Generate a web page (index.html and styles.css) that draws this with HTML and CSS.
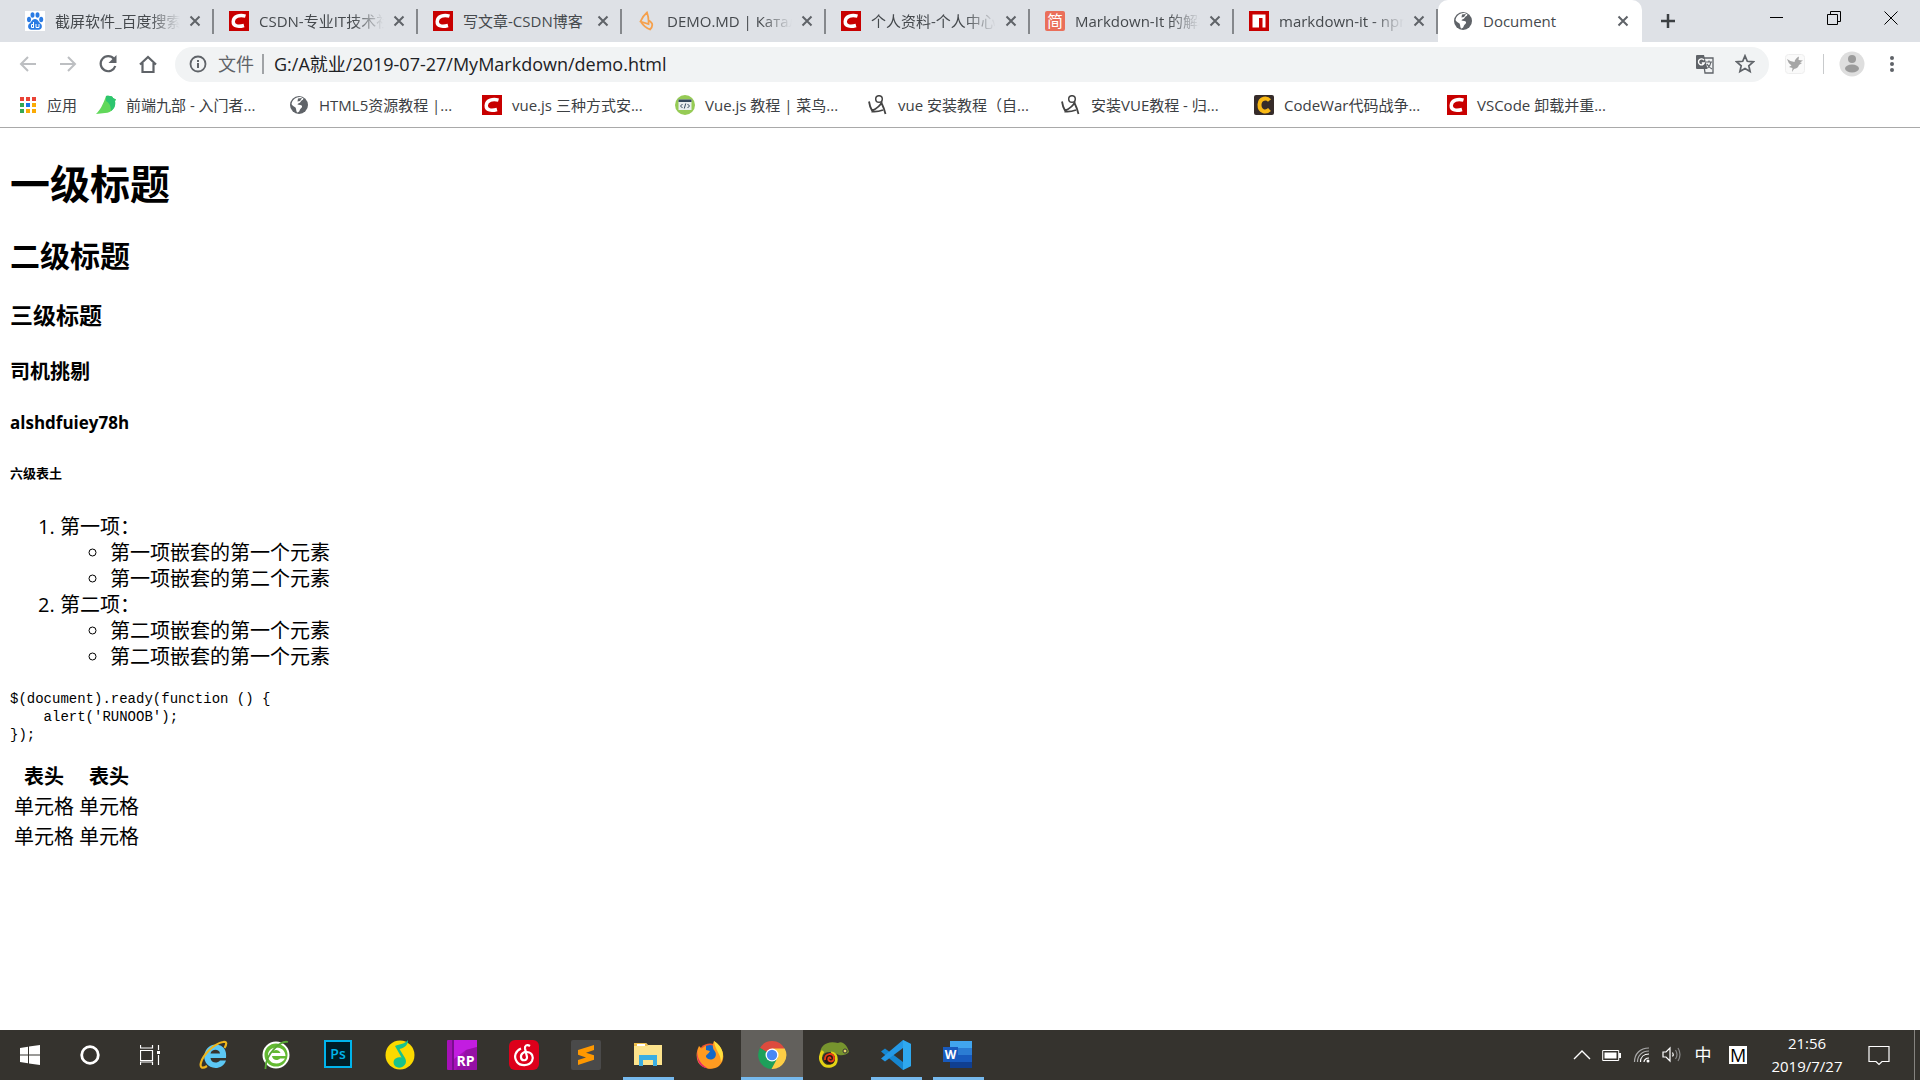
FILE: index.html
```
<!DOCTYPE html>
<html lang="zh-CN">
<head>
    <meta charset="UTF-8">
    <meta name="viewport" content="width=device-width, initial-scale=1.0">
    <title>Document</title>
    <link rel="stylesheet" href="styles.css">
</head>
<body>
    <!-- Shared icons -->
    <svg class="defs" width="0" height="0">
        <symbol id="close" viewBox="0 0 12 12"><path d="M1.5 1.5l9 9M10.5 1.5l-9 9" stroke="#5f6368" stroke-width="2" fill="none"/></symbol>
        <symbol id="csdn" viewBox="0 0 20 20">
            <rect width="20" height="20" fill="#c80000"/>
            <path d="M16.5 5.2C11 3.600 4.600 5 4.200 10.500C4 15.600 9.500 16 15 14.500" stroke="#fff" stroke-width="3.400" fill="none"/>
        </symbol>
        <symbol id="globe" viewBox="0 0 20 20">
            <circle cx="10" cy="10" r="9" fill="#5f6368"/>
            <path d="M8 2.500C10 1.500 13 2 14.500 3.500C14 5.500 12 5.200 11.500 7C11 8.500 8.500 8 8.500 9.500C10 10 12.500 9.500 13 11C13.500 12.500 12 13 11 14.500C10.500 16 10 17 8.500 17.500C7 17 7.500 14 6.500 12.500C5 11.500 3 10.500 2.500 9C3 6 5 3.500 8 2.500Z" fill="#fff"/>
            <path d="M9 3.500l4-.5-2 3-2.500.5zM13.500 9l3.500-2 .8 3-2 4-2-1z" fill="#5f6368"/>
        </symbol>
        <symbol id="figure" viewBox="0 0 20 20">
            <circle cx="11" cy="4" r="3.300" stroke="#444" stroke-width="1.500" fill="none"/>
            <path d="M1 6.500C1.500 10 2.500 13 4 15.500C8 14 12 11.500 14 6.500M13.500 8C15 11 16.500 15 17.500 19M3.500 16.500C7 17 11 16.500 15 15" stroke="#444" stroke-width="1.800" fill="none"/>
        </symbol>
    </svg>

    <!-- Tabs -->
    <div class="tab-bar">
        <div class="tab">
            <svg class="favicon" viewBox="0 0 20 20"><rect width="20" height="20" fill="#fff"/><g fill="#2a7be4"><ellipse cx="4" cy="8.500" rx="2" ry="2.800"/><ellipse cx="7.500" cy="4" rx="2" ry="2.800"/><ellipse cx="12.500" cy="4" rx="2" ry="2.800"/><ellipse cx="16.200" cy="8.500" rx="2" ry="2.800"/><path d="M10 8C13 8 13.500 11 15.500 12.500C18 14.500 17 19 13.500 18.800H6.500C3 19 2 14.500 4.500 12.500C6.500 11 7 8 10 8Z"/></g><path d="M8.500 11v6M8.500 13.500h-2v3h2M11 13v3.500h3V13" stroke="#fff" fill="none"/></svg>
            <a href="#">截屏软件_百度搜索</a>
            <button class="tab-close" aria-label="关闭"><svg width="12" height="12"><use href="#close"/></svg></button>
        </div>
        <div class="tab">
            <svg class="favicon"><use href="#csdn"/></svg>
            <a href="#">CSDN-专业IT技术社区</a>
            <button class="tab-close" aria-label="关闭"><svg width="12" height="12"><use href="#close"/></svg></button>
        </div>
        <div class="tab">
            <svg class="favicon"><use href="#csdn"/></svg>
            <a href="#" class="fits">写文章-CSDN博客</a>
            <button class="tab-close" aria-label="关闭"><svg width="12" height="12"><use href="#close"/></svg></button>
        </div>
        <div class="tab">
            <svg class="favicon" viewBox="0 0 20 20" fill="none" stroke="#f5a04c" stroke-width="1.800"><path d="M10 1.500C7 4 4.500 8 3.500 10.500L11.500 13Q12 7 10 1.500ZM4 11C6 14 9 17 13 18.500Q16 15.500 15 12.500Q13.500 10 11 9"/></svg>
            <a href="#">DEMO.MD | Каталог</a>
            <button class="tab-close" aria-label="关闭"><svg width="12" height="12"><use href="#close"/></svg></button>
        </div>
        <div class="tab">
            <svg class="favicon"><use href="#csdn"/></svg>
            <a href="#">个人资料-个人中心</a>
            <button class="tab-close" aria-label="关闭"><svg width="12" height="12"><use href="#close"/></svg></button>
        </div>
        <div class="tab">
            <svg class="favicon" viewBox="0 0 20 20"><rect width="20" height="20" rx="2" fill="#ea6f5a"/><text x="10" y="16" font-size="16" text-anchor="middle" fill="#fff">简</text></svg>
            <a href="#">Markdown-It 的解析</a>
            <button class="tab-close" aria-label="关闭"><svg width="12" height="12"><use href="#close"/></svg></button>
        </div>
        <div class="tab">
            <svg class="favicon" viewBox="0 0 20 20"><rect width="20" height="20" fill="#c80000"/><path d="M3.500 3.500h13v13h-3v-9.500h-3.500v9.500h-6.500z" fill="#fff"/></svg>
            <a href="#">markdown-it - npm</a>
            <button class="tab-close" aria-label="关闭"><svg width="12" height="12"><use href="#close"/></svg></button>
        </div>
        <div class="tab active">
            <svg class="favicon"><use href="#globe"/></svg>
            <a href="#" class="fits">Document</a>
            <button class="tab-close" aria-label="关闭"><svg width="12" height="12"><use href="#close"/></svg></button>
        </div>
        <button class="new-tab" aria-label="新标签页"><svg width="16" height="16"><path d="M8 1v14M1 8h14" stroke="#3c4043" stroke-width="2.500"/></svg></button>
        <div class="window-controls">
            <button aria-label="最小化"><svg width="14" height="14"><path d="M0 6.500h13" stroke="#000"/></svg></button>
            <button aria-label="还原"><svg width="14" height="14" fill="none" stroke="#000"><path d="M.5 3.500h10v10h-10zM3.500 3v-2.500h10v10h-3"/></svg></button>
            <button aria-label="关闭窗口"><svg width="14" height="14"><path d="M.5.5l13 13M13.500.5l-13 13" stroke="#000"/></svg></button>
        </div>
    </div>

    <!-- Address bar -->
    <div class="toolbar">
        <button class="nav-btn" aria-label="后退"><svg width="20" height="20" fill="none" stroke="#bdbfc2" stroke-width="2"><path d="M18 10H3M10 3l-7 7 7 7"/></svg></button>
        <button class="nav-btn" aria-label="前进"><svg width="20" height="20" fill="none" stroke="#bdbfc2" stroke-width="2"><path d="M2 10h15M10 3l7 7-7 7"/></svg></button>
        <button class="nav-btn" aria-label="刷新"><svg width="20" height="20"><path d="M16 5A7.500 7.500 0 1 0 17.300 12" stroke="#5f6368" stroke-width="2.200" fill="none"/><path d="M18.500 1v8h-8z" fill="#5f6368"/></svg></button>
        <button class="nav-btn" aria-label="主页"><svg width="20" height="20"><path d="M2 10.500L10 3l8 7.500M4.500 9v9h11V9" stroke="#5f6368" stroke-width="2.200" fill="none"/></svg></button>
        <div class="omnibox">
            <svg width="18" height="18"><circle cx="9" cy="9" r="7.500" stroke="#5f6368" stroke-width="1.800" fill="none"/><path d="M9 8v5M9 5v2" stroke="#5f6368" stroke-width="2"/></svg>
            <label for="url">文件</label>
            <input type="text" id="url" value="G:/A就业/2019-07-27/MyMarkdown/demo.html">
            <button aria-label="翻译"><svg width="20" height="20"><path d="M8 4h10v15H10z" fill="#f1f3f4" stroke="#5f6368" stroke-width="1.300"/><path d="M2 1h7l3.500 14H2Q1 15 1 14V2Q1 1 2 1z" fill="#5f6368"/><path d="M9 6.200A3 3 0 1 0 9.300 9H6.800" stroke="#fff" stroke-width="1.400" fill="none"/><path d="M11 8h6M14 6.500V8M16 8C15.500 11 14 13 12.500 14M12 10c1 2 3 4 5 5" stroke="#5f6368" stroke-width="1.200" fill="none"/></svg></button>
            <button aria-label="收藏"><svg width="20" height="20"><path d="M10 1.800l2.300 5.500 6 .5-4.500 4 1.300 5.800-5.100-3.100-5.100 3.100 1.300-5.800-4.500-4 6-.5z" stroke="#5f6368" stroke-width="1.700" fill="none"/></svg></button>
        </div>
        <button class="ext-btn" aria-label="扩展程序"><svg width="20" height="20"><rect x=".5" y=".5" width="19" height="19" rx="3" fill="#fafafa" stroke="#eee"/><path d="M2 5q4 3 7.500 3Q10 4.500 14 2.500L13.500 6l4.500.5-3 2 2 .5-3 2Q13 14.500 9 15L7 18 7.500 14 4 13l2.500-1.500Q3 9 2 5z" fill="#a6a6a6"/></svg></button>
        <span class="divider"></span>
        <button class="avatar" aria-label="用户"><svg width="26" height="26"><circle cx="13" cy="13" r="12.500" fill="#dedede"/><circle cx="13" cy="8" r="4" fill="#9b9b9b"/><ellipse cx="13" cy="17.500" rx="7" ry="4" fill="#9b9b9b"/></svg></button>
        <button class="menu-btn" aria-label="菜单"><svg width="20" height="20" fill="#5f6368"><circle cx="10" cy="4" r="2"/><circle cx="10" cy="10" r="2"/><circle cx="10" cy="16" r="2"/></svg></button>
    </div>

    <!-- Bookmarks -->
    <div class="bookmarks">
        <a href="#" class="apps">
            <svg width="16" height="16"><path d="M0 0h4v4H0zM6 0h4v4H6zM12 0h4v4h-4z" fill="#ea4335"/><path d="M0 6h4v4H0zM0 12h4v4H0z" fill="#34a853"/><path d="M6 6h4v4H6z" fill="#1a73e8"/><path d="M12 6h4v4h-4zM6 12h4v4H6zM12 12h4v4h-4z" fill="#fbab05"/></svg>
            <span>应用</span>
        </a>
        <a href="#"><svg class="favicon" viewBox="0 0 20 20"><path d="M0 19C4 15 7 10 10 1C13 .5 17 1 17 3L20 4.500L19 6C20 12 16 18 9 18Z" fill="#61d85a"/><path d="M10 1C13 .5 17 1 17 3L20 4.500L19 6C20 11 18 14 15 16C15 10 13 8 10 6Z" fill="#2dc56f"/></svg><span>前端九部 - 入门者...</span></a>
        <a href="#"><svg class="favicon"><use href="#globe"/></svg><span>HTML5资源教程 |...</span></a>
        <a href="#"><svg class="favicon"><use href="#csdn"/></svg><span>vue.js 三种方式安...</span></a>
        <a href="#"><svg class="favicon" viewBox="0 0 20 20"><circle cx="10" cy="10" r="10" fill="#96cb55"/><path d="M3.500 4.500h13V15h-13z" fill="#e8eef0"/><path d="M3.500 4.500h13v2.500h-13z" fill="#34495e"/><path d="M7.500 9l-2 2 2 2M12.500 9l2 2-2 2M10.700 8.500l-1.400 5" stroke="#34495e" fill="none"/></svg><span>Vue.js 教程 | 菜鸟...</span></a>
        <a href="#"><svg class="favicon"><use href="#figure"/></svg><span>vue 安装教程（自...</span></a>
        <a href="#"><svg class="favicon"><use href="#figure"/></svg><span>安装VUE教程 - 归...</span></a>
        <a href="#"><svg class="favicon" viewBox="0 0 20 20"><rect width="20" height="20" rx="2" fill="#362c2a"/><path d="M15.500 5.500C13 2.500 6 2.500 5.500 9.500C5.300 17 12 18 15.500 14.500" stroke="#f9b916" stroke-width="4" fill="none"/></svg><span>CodeWar代码战争...</span></a>
        <a href="#"><svg class="favicon"><use href="#csdn"/></svg><span>VSCode 卸载并重...</span></a>
    </div>

    <!-- Rendered markdown -->
    <main class="content">
        <h1>一级标题</h1>
        <h2>二级标题</h2>
        <h3>三级标题</h3>
        <h4>司机挑剔</h4>
        <h5>alshdfuiey78h</h5>
        <h6>六级表土</h6>
        <ol>
            <li>第一项：
                <ul>
                    <li>第一项嵌套的第一个元素</li>
                    <li>第一项嵌套的第二个元素</li>
                </ul>
            </li>
            <li>第二项：
                <ul>
                    <li>第二项嵌套的第一个元素</li>
                    <li>第二项嵌套的第一个元素</li>
                </ul>
            </li>
        </ol>
        <pre><code>$(document).ready(function () {
    alert('RUNOOB');
});</code></pre>
        <table>
            <thead>
                <tr><th>表头</th><th>表头</th></tr>
            </thead>
            <tbody>
                <tr><td>单元格</td><td>单元格</td></tr>
                <tr><td>单元格</td><td>单元格</td></tr>
            </tbody>
        </table>
    </main>

    <!-- Taskbar -->
    <footer class="taskbar">
        <div class="system">
            <button aria-label="开始"><svg width="20" height="20" fill="#fff"><path d="M0 3l8-1.200V9.500H0zM9 1.600L20 0v9.500H9zM0 10.500h8v7.700L0 17zM9 10.500h11V20L9 18.400z"/></svg></button>
            <button aria-label="搜索"><svg width="20" height="20"><circle cx="10" cy="10" r="8.300" fill="none" stroke="#fff" stroke-width="2.800"/></svg></button>
            <button aria-label="任务视图"><svg width="20" height="20" fill="none" stroke="#fff" stroke-width="1.200"><path d="M.5 5.500h12v10H.5zM.5 0v3h12V0M.5 20v-3h12v3M18.500 0v5M18.500 10v10"/><path d="M17 6h3v3h-3z" fill="#fff" stroke="none"/></svg></button>
        </div>
        <div class="pinned">
            <button aria-label="Internet Explorer"><svg width="30" height="30"><path d="M27 18H11.500C12 23 18 24 21 20.500H27C25 26 21 28 16.500 28C1 27 2 5 17 4.500C25 5 28 11 27 18ZM11.500 13.500H21C20.500 8.500 12.500 8.500 11.500 13.500Z" fill="#5cc8f5"/><path d="M25.500 8C28 4 28 1 24 2C15 3.500 4 15 2 22.500C.5 28 3.500 29 8 26" stroke="#efb51c" stroke-width="2.200" fill="none"/></svg></button>
            <button aria-label="360"><svg width="30" height="30"><circle cx="15" cy="15" r="12.500" fill="#63b932" stroke="#fff" stroke-width="2"/><path d="M24.500 16H11C11.500 20.500 17 21 19 18.500H24C19 27 6 24 7 14.500C8 5 24 5 24.500 16ZM11 13H19.500C18 9 12 9 11 13Z" fill="#fff"/><path d="M27 2C20 0 4 14 4.500 29" stroke="#58a834" stroke-width="1.800" fill="none"/></svg></button>
            <button aria-label="Photoshop"><svg width="30" height="30"><rect x="2" y="1" width="26" height="26" fill="#001d26" stroke="#00b4ec" stroke-width="2"/><text x="15" y="19" font-size="14" font-weight="600" text-anchor="middle" fill="#00b4ec">Ps</text></svg></button>
            <button aria-label="QQ音乐"><svg width="30" height="30"><circle cx="15" cy="15" r="14.500" fill="#fbd900"/><path d="M10 6C15 4 20 4 23 0C23.500 4 20 8 14.500 9L20 18C24 25 15 30 10.500 26.500C6 22 10 16 16.500 17.500L10 6Z" fill="#17c28c"/></svg></button>
            <button aria-label="Axure RP"><svg width="30" height="30"><rect width="30" height="30" rx="1" fill="#a610b8"/><path d="M7 0h23v7L19 10l-12 9z" fill="#c21de0"/><path d="M19 10L30 7v23H9z" fill="#8a1098" opacity=".6"/><path d="M6 0v30" stroke="#4f0a66"/><text x="18.500" y="26" font-size="14" font-weight="bold" text-anchor="middle" fill="#fff">RP</text></svg></button>
            <button aria-label="网易云音乐"><svg width="30" height="30"><rect width="30" height="30" rx="6" fill="#dd001b"/><path d="M21 6C18 4 15.500 5.500 16 8.500L18 17C18.500 21 12.500 21.500 12 17.500C11.500 13.500 15 11.500 18.500 12C23 12.500 25 17 23 21C20 26.500 11 26 8 22C4 16.500 7 10.500 12 8.500" stroke="#fff" stroke-width="2.200" fill="none"/></svg></button>
            <button aria-label="Sublime Text"><svg width="30" height="30"><rect width="30" height="30" rx="2" fill="#4a4a4a"/><path d="M7 10l16-5v5l-8 2.800 8 2.500v4.500L7 25v-5l8-2.500-8-2.700z" fill="#ff9800"/></svg></button>
            <button class="open" aria-label="文件资源管理器"><svg width="30" height="30"><path d="M1 3h12l2 2h14v20H1z" fill="#fce38c"/><path d="M1 3h12l2 3H1z" fill="#edbe4b"/><path d="M4 4h8v2H4z" fill="#fff"/><path d="M6 26V15h18v11h-4v-6h-10v6z" fill="#3aaee3"/></svg></button>
            <button aria-label="Firefox"><svg width="30" height="30"><circle cx="15" cy="16" r="12.500" fill="#f2562e"/><circle cx="15" cy="14" r="9" fill="#1268c9"/><path d="M19 1C28 7 32 19 24 26C18 31 7 29 3 22C1 17 1 12 4 6L6.500 8.500L11 5.500L11 10L15 11C13 15 11 14 11 17C15 23 25 17 19 10C17 7 18 3 19 1Z" fill="#ff9b21"/><path d="M3 8C1 16 4 23 12 28C5 28 0 19 3 8Z" fill="#e5246b"/><path d="M19 1C28 7 30 15 26 22C26 14 20 10 19 1Z" fill="#ffe03d"/></svg></button>
            <button class="open current" aria-label="Chrome"><svg width="30" height="30"><path d="M15 15L3 8A14 14 0 0 1 27.500 8.500Z" fill="#dd4b3e"/><path d="M15 15L3 8A14 14 0 0 0 14.500 29L21 18Z" fill="#1da05a"/><path d="M15 8.500H27.700A14 14 0 0 1 14.500 29L21 17Z" fill="#fccd45"/><circle cx="15" cy="15" r="6.500" fill="#fff"/><circle cx="15" cy="15" r="5.200" fill="#4788f4"/></svg></button>
            <button aria-label="蜥蜴"><svg width="30" height="30"><path d="M1 16C0 5 9 0 19 3C24 0 29 7 30 12Q26 16 20 15Q12 10 6 13Q3 15 3 18Z" fill="#76942e"/><path d="M4 11C-2 19 4 28 12 26C19 24 19 14 12 13" stroke="#e4d313" stroke-width="3" fill="none"/><circle cx="10.500" cy="18.500" r="5.500" fill="#241a10"/><path d="M6 20C5 13 15 12 15 18C15 23 8 22 9.500 18C10.500 16.500 12 18 11.500 19" stroke="#e93c18" stroke-width="2" fill="none"/><circle cx="26" cy="11" r="2" fill="#ead56b" stroke="#333"/></svg></button>
            <button class="open" aria-label="Visual Studio Code"><svg width="30" height="30"><path d="M22 0L30 4V26L22 30L0 11.500L4 8.500L22 22Z" fill="#1686d0"/><path d="M22 0V8L4 21.500L0 18.500L22 0Z" fill="#2498e5"/><path d="M22 0L30 4V26L22 30Z" fill="#2fa8ee"/></svg></button>
            <button class="open" aria-label="Word"><svg width="30" height="30"><path d="M7 1h22v7H7z" fill="#41a5ee"/><path d="M7 8h22v7H7z" fill="#2b7cd3"/><path d="M7 15h22v7H7z" fill="#185abd"/><path d="M7 22h22v6H7z" fill="#103f91"/><rect y="7" width="15" height="15" fill="#185abd"/><text x="7.500" y="19" font-size="12" font-weight="bold" text-anchor="middle" fill="#fff">W</text></svg></button>
        </div>
        <div class="tray">
            <button aria-label="显示隐藏的图标"><svg width="18" height="20" fill="none" stroke="#fff" stroke-width="1.400"><path d="M1 14l8-8 8 8"/></svg></button>
            <button aria-label="电池"><svg width="20" height="20"><path d="M.7 5.500h16v10H.7z" fill="none" stroke="#fff"/><path d="M2.500 7.500h12v6h-12zM17 8h2v5h-2z" fill="#fff"/></svg></button>
            <button aria-label="网络"><svg width="18" height="20" fill="none" stroke="#fff" stroke-width="1.200"><path d="M11 17C11 15 13 13 16 13M7.500 17C7.500 12 11 9 16 9" /><path d="M4.500 17C4.500 10.500 9 6 16 6M1.500 17C1.500 9 7 3 16 3" stroke="#aaa"/><circle cx="15" cy="16" r="1.500" fill="#fff" stroke="none"/></svg></button>
            <button aria-label="音量"><svg width="20" height="20" fill="none" stroke="#fff" stroke-width="1.200"><path d="M1 7h3l4-4v13l-4-4H1zM10.500 7.500q1.500 2 0 4"/><path d="M13.500 5q3 4.500 0 9M16 3q4 6.500 0 13" stroke="#888"/></svg></button>
            <button class="ime" aria-label="输入法">中</button>
            <button class="mode" aria-label="微软拼音">M</button>
            <div class="clock"><time>21:56</time><time>2019/7/27</time></div>
            <button aria-label="通知"><svg width="22" height="22"><path d="M1 2.500h20v15h-7l-3 3-3-3H1z" stroke="#fff" stroke-width="1.200" fill="none"/></svg></button>
            <button class="show-desktop" aria-label="显示桌面"></button>
        </div>
    </footer>
</body>
</html>
```
FILE: styles.css
```
* {
    box-sizing: border-box;
}
body {
    margin: 0;
    min-height: 100vh;
    display: flex;
    flex-direction: column;
    background-color: #fff;
    color: #000;
    font-family: "Open Sans", "Noto Sans CJK SC", sans-serif;
}
button {
    display: flex;
    align-items: center;
    justify-content: center;
    padding: 0;
    border: none;
    background: none;
    font-family: inherit;
    cursor: pointer;
}
svg {
    display: block;
    flex-shrink: 0;
}
.defs {
    position: absolute;
}
.favicon {
    width: 20px;
    height: 20px;
}

/* Tabs */
.tab-bar {
    display: flex;
    height: 42px;
    padding-left: 10px;
    background-color: #dee1e6;
}
.tab {
    display: flex;
    align-items: center;
    width: 204px;
    height: 42px;
    padding: 0 13px 0 15px;
    background: linear-gradient(#85888c, #85888c) right center / 2px 25px no-repeat;
}
.tab a {
    flex: 1;
    margin: 0 9px 0 10px;
    overflow: hidden;
    white-space: nowrap;
    color: #45494d;
    font-size: 15px;
    line-height: 24px;
    text-decoration: none;
    mask-image: linear-gradient(to right, #000 75%, transparent);
}
.tab a.fits {
    mask-image: none;
}
.tab-close {
    width: 12px;
    height: 20px;
}
.tab.active {
    background: #fff;
    border-radius: 10px 10px 0 0;
}
.new-tab {
    width: 52px;
}
.window-controls {
    display: flex;
    height: 36px;
    margin-left: auto;
    padding-right: 1px;
}
.window-controls button {
    width: 57px;
}

/* Address bar */
.toolbar {
    display: flex;
    align-items: center;
    height: 44px;
    padding: 0 8px;
}
.nav-btn {
    width: 40px;
    height: 36px;
}
.omnibox {
    display: flex;
    align-items: center;
    flex: 1;
    height: 35px;
    margin-left: 7px;
    padding: 0 14px;
    border-radius: 18px;
    background-color: #f1f3f4;
    font-size: 18px;
}
.omnibox label {
    margin-left: 11px;
    padding-right: 8px;
    border-right: 2px solid #a0a3a6;
    color: #5f6368;
    line-height: 20px;
}
.omnibox input {
    flex: 1;
    height: 32px;
    padding: 0 0 2px 10px;
    border: none;
    outline: none;
    background: none;
    color: #202124;
    font-family: inherit;
    font-size: 18px;
}
.omnibox button {
    margin-left: 20px;
}
.ext-btn {
    margin-left: 16px;
}
.divider {
    width: 1px;
    height: 20px;
    margin: 0 15px 0 18px;
    background-color: #c8cacc;
}
.menu-btn {
    width: 40px;
    margin-left: 7px;
}

/* Bookmarks */
.bookmarks {
    display: flex;
    align-items: center;
    height: 42px;
    padding-left: 20px;
    padding-bottom: 3px;
    border-bottom: 1px solid #a9a9a9;
}
.bookmarks a {
    display: flex;
    align-items: center;
    gap: 10px;
    width: 193px;
    color: #3c4043;
    font-size: 15px;
    line-height: 24px;
    text-decoration: none;
    white-space: nowrap;
}
.bookmarks .apps {
    gap: 11px;
    width: 76px;
}

/* Page content */
.content {
    flex: 1;
    padding: 0 10px;
    font-size: 20px;
    line-height: 26px;
}
.content h1 {
    margin: 30px 0 26px;
    font-size: 40px;
    line-height: 52px;
}
.content h2 {
    margin: 0 0 24px;
    font-size: 30px;
    line-height: 40px;
}
.content h3 {
    margin: 0 0 28px;
    font-size: 23px;
    line-height: 31px;
}
.content h4 {
    margin: 0 0 27px;
    font-size: 20px;
    line-height: 26px;
}
.content h5 {
    margin: 0 0 30px;
    font-size: 17px;
    line-height: 22px;
}
.content h6 {
    margin: 0 0 32px;
    font-size: 13px;
    line-height: 18px;
}
.content ol {
    margin: 0 0 20px;
    padding-left: 50px;
}
.content ul {
    margin: 0;
    padding-left: 50px;
}
.content pre {
    margin: 0 0 16px;
    font-family: "Liberation Mono", monospace;
    font-size: 14px;
    line-height: 18px;
}
.content code {
    font-family: inherit;
}
.content table {
    border-spacing: 3px;
    line-height: 25px;
}
.content th,
.content td {
    padding: 1px;
}

/* Taskbar */
.taskbar {
    display: flex;
    height: 50px;
    background-color: #35332e;
    color: #fff;
}
.taskbar button {
    color: #fff;
}
.system,
.pinned,
.tray {
    display: flex;
}
.system button {
    width: 60px;
}
.pinned {
    margin-left: 3px;
}
.pinned button {
    width: 62px;
}
.pinned .open {
    background: linear-gradient(#76b9ed, #76b9ed) center bottom / 51px 3px no-repeat;
}
.pinned .current {
    background-color: #62605c;
    background-size: 62px 3px;
}
.tray {
    align-items: center;
    gap: 11px;
    margin-left: auto;
}
.ime {
    width: 20px;
    font-size: 17px;
    line-height: 22px;
}
.mode {
    width: 18px;
    height: 18px;
    margin: 0 9px 0 5px;
    background-color: #fff;
    font-size: 18px;
    line-height: 18px;
}
.taskbar .mode {
    color: #000;
}
.clock {
    display: flex;
    flex-direction: column;
    align-items: center;
    width: 80px;
    margin-right: 10px;
    font-size: 15px;
    line-height: 23px;
}
.show-desktop {
    width: 6px;
    height: 50px;
    margin-left: 13px;
}
.taskbar .show-desktop {
    border-left: 1px solid #85837f;
}
```
